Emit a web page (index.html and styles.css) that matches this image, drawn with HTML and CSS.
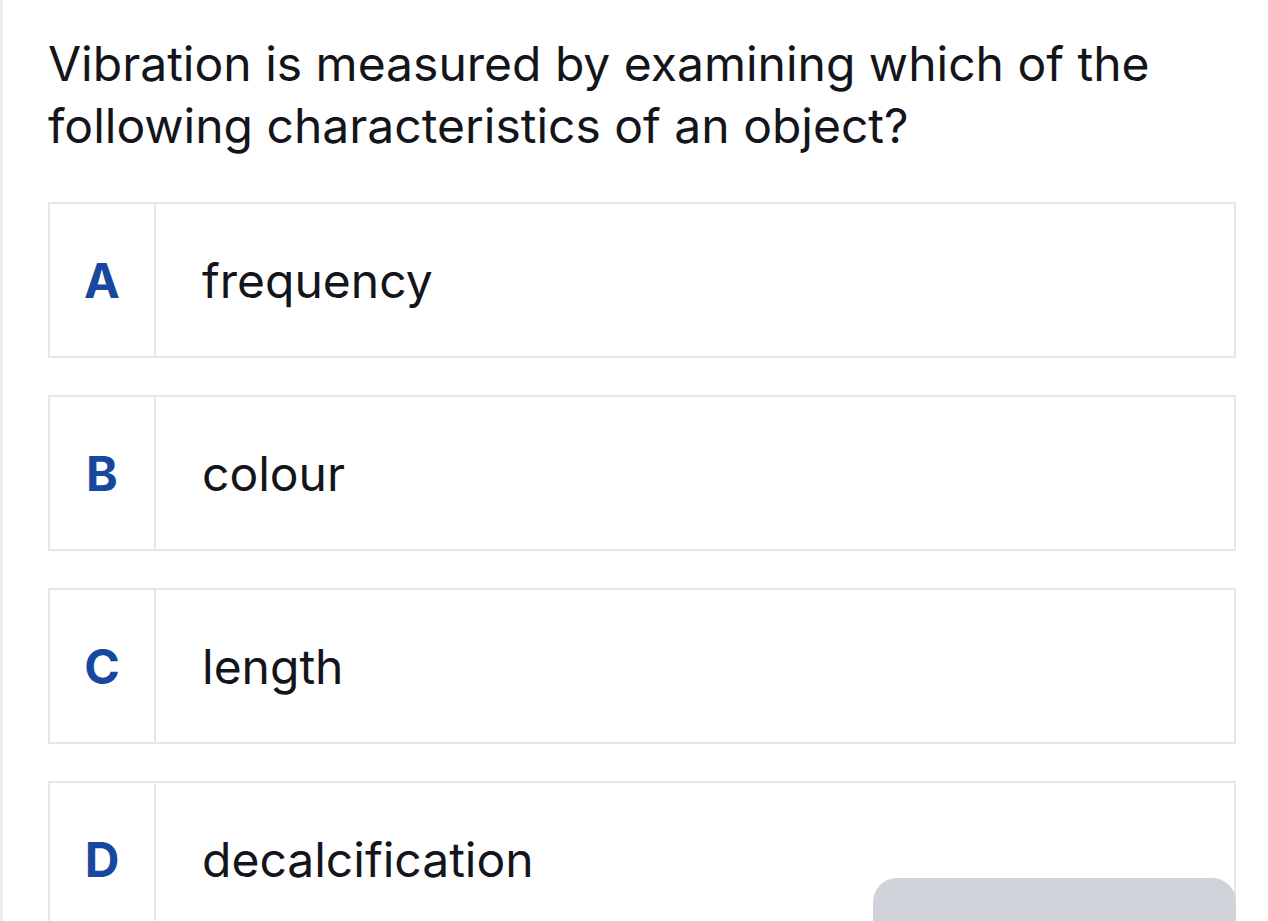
FILE: index.html
```html
<!DOCTYPE html>
<html>
<head>
<meta charset="utf-8">
<link rel="stylesheet" href="styles.css">
</head>
<body>
<div class="page">
  <h1 class="question">Vibration is measured by examining which of the following characteristics of an object?</h1>
  <div class="options">
    <div class="option"><div class="letter">A</div><div class="answer">frequency</div></div>
    <div class="option"><div class="letter">B</div><div class="answer">colour</div></div>
    <div class="option"><div class="letter">C</div><div class="answer">length</div></div>
    <div class="option"><div class="letter">D</div><div class="answer">decalcification</div></div>
  </div>
</div>
<div class="action"></div>
</body>
</html>
```
FILE: styles.css
```css
html, body {
  margin: 0;
  padding: 0;
  background: #fff;
  height: 100%;
  overflow: hidden;
}
body {
  font-family: Inter, "Noto Sans", sans-serif;
  color: #14151a;
}
.page {
  border-left: 3px solid #ececec;
  min-height: 100%;
  box-sizing: border-box;
  padding: 33px 32px 0 45px;
}
.question {
  margin: 0;
  font-size: 48px;
  font-weight: 400;
  line-height: 62px;
  width: 1150px;
}
.options {
  margin-top: 45px;
  display: flex;
  flex-direction: column;
  gap: 37px;
}
.option {
  display: flex;
  height: 156px;
  box-sizing: border-box;
  border: 2px solid #e6e6e8;
  width: 1188px;
}
.letter {
  width: 104px;
  flex: none;
  border-right: 2px solid #e6e6e8;
  display: flex;
  align-items: center;
  justify-content: center;
  font-weight: 700;
  font-size: 48px;
  color: #1847a0;
}
.answer {
  display: flex;
  align-items: center;
  padding-left: 46px;
  font-size: 48px;
}
.action {
  position: fixed;
  left: 873px;
  width: 363px;
  top: 878px;
  height: 80px;
  border-radius: 24px;
  background: #d0d3da;
}
```
